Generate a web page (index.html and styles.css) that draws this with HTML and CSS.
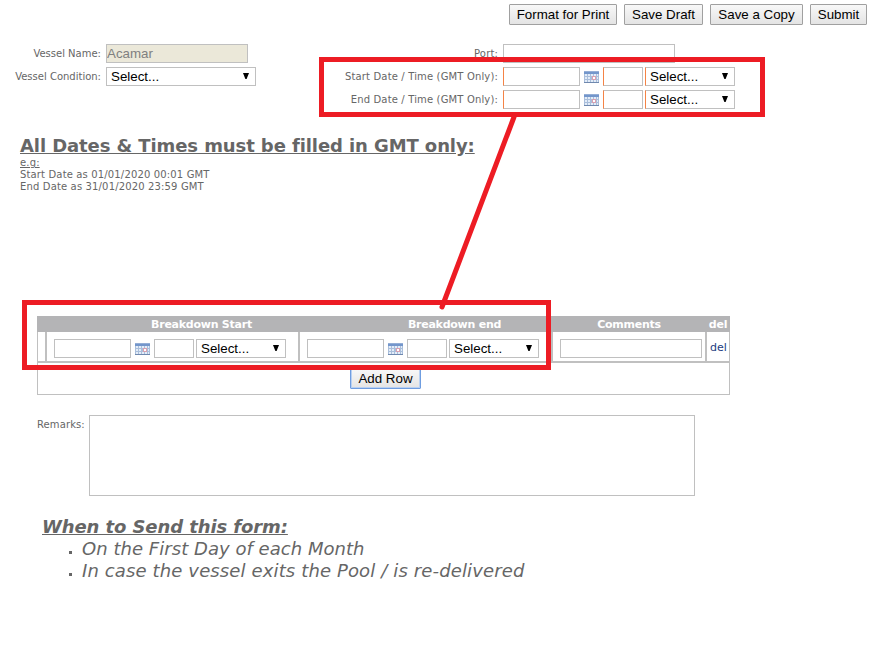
FILE: index.html
```html
<!DOCTYPE html>
<html lang="en">
<head>
    <meta charset="UTF-8">
    <title>Breakdown Report</title>
    <link rel="stylesheet" href="styles.css">
</head>
<body>
    <!-- Calendar icon, shared by all date fields -->
    <svg class="defs" width="0" height="0">
        <symbol id="calendar" viewBox="0 0 15 12">
            <rect width="15" height="12" fill="#a9bedb"/>
            <rect width="15" height="3" fill="#7396cb"/>
            <rect width="15" height="1" fill="#94aed6"/>
            <path d="M1 3h2v2H1zM4 3h2v2H4zM7 3h2v2H7zM10 3h2v2h-2zM13 3h1v2h-1zM1 6h2v2H1zM4 6h2v2H4zM13 6h1v2h-1zM1 9h2v2H1zM4 9h2v2H4zM7 9h2v2H7zM10 9h2v2h-2zM13 9h1v2h-1z" fill="#e3ecf8"/>
            <path d="M0 11h15v1H0z" fill="#6f88ae"/>
            <rect x="8.5" y="5.5" width="3" height="3" fill="#fff" stroke="#d9a0b0"/>
        </symbol>
    </svg>

    <div class="page">
        <div class="toolbar">
            <button class="print">Format for Print</button>
            <button class="draft">Save Draft</button>
            <button class="copy">Save a Copy</button>
            <button class="submit">Submit</button>
        </div>

        <div class="fields">
            <div class="left">
                <div class="row">
                    <label>Vessel Name:</label>
                    <input class="vessel" type="text" value="Acamar" disabled>
                </div>
                <div class="row">
                    <label>Vessel Condition:</label>
                    <div class="select condition">Select...</div>
                </div>
            </div>
            <div class="right">
                <div class="row">
                    <label>Port:</label>
                    <input class="port" type="text">
                </div>
                <div class="row required">
                    <label>Start Date / Time (GMT Only):</label>
                    <input class="date" type="text">
                    <svg class="cal"><use href="#calendar"/></svg>
                    <input class="time" type="text">
                    <div class="select">Select...</div>
                </div>
                <div class="row required">
                    <label>End Date / Time (GMT Only):</label>
                    <input class="date" type="text">
                    <svg class="cal"><use href="#calendar"/></svg>
                    <input class="time" type="text">
                    <div class="select">Select...</div>
                </div>
            </div>
        </div>

        <div class="notice">
            <h2>All Dates &amp; Times must be filled in GMT only:</h2>
            <p><u>e.g:</u></p>
            <p>Start Date as 01/01/2020 00:01 GMT</p>
            <p>End Date as 31/01/2020 23:59 GMT</p>
        </div>

        <div class="breakdown">
            <div class="grid head">
                <span></span>
                <span class="wide">Breakdown Start</span>
                <span class="wide">Breakdown end</span>
                <span>Comments</span>
                <span>del</span>
            </div>
            <div class="grid line">
                <div></div>
                <div class="cell">
                    <input class="date" type="text">
                    <svg class="cal"><use href="#calendar"/></svg>
                    <input class="time" type="text">
                    <div class="select">Select...</div>
                </div>
                <div class="cell">
                    <input class="date" type="text">
                    <svg class="cal"><use href="#calendar"/></svg>
                    <input class="time" type="text">
                    <div class="select">Select...</div>
                </div>
                <div class="cell">
                    <input class="comments" type="text">
                </div>
                <div class="del"><a>del</a></div>
            </div>
            <div class="foot">
                <button class="add">Add Row</button>
            </div>
        </div>

        <div class="remarks">
            <label>Remarks:</label>
            <textarea></textarea>
        </div>

        <div class="when">
            <h2>When to Send this form:</h2>
            <ul>
                <li class="first">On the First Day of each Month</li>
                <li class="second">In case the vessel exits the Pool / is re-delivered</li>
            </ul>
        </div>

        <!-- Red markup over the form -->
        <svg class="markup" width="876" height="647" fill="none" stroke="#ed1c24" stroke-width="5">
            <rect x="321.5" y="59.5" width="441" height="55"/>
            <rect x="24.5" y="302.5" width="524" height="65"/>
            <path d="M514 117L442 307" stroke-linecap="round"/>
        </svg>
    </div>
</body>
</html>
```

FILE: styles.css
```css
* {
    box-sizing: border-box;
}

body {
    margin: 0;
    background: #fff;
    color: #666;
    font-family: Verdana, "DejaVu Sans", sans-serif;
    font-size: 10px;
}

.defs {
    display: block;
}

.page {
    position: relative;
    width: 876px;
    height: 647px;
    overflow: hidden;
}

/* Buttons */
.toolbar {
    display: flex;
    justify-content: flex-end;
    gap: 7px;
    padding: 4px 9px 0 0;
}

button {
    height: 21px;
    padding: 0;
    border: 1px solid #a0a0a0;
    border-radius: 1px;
    background: linear-gradient(#f8f8f8, #e4e4e4);
    color: #000;
    font: 13.33px/19px "Liberation Sans", Arial, sans-serif;
    white-space: nowrap;
}

.print { width: 108px; }
.draft { width: 79px; }
.copy { width: 93px; }
.submit { width: 57px; }

/* Inputs */
input, textarea, .select {
    height: 19px;
    margin: 0;
    padding: 0 1px;
    border: 1px solid #c0c0c0;
    border-radius: 0;
    background: #fff;
    color: #000;
    font: 13.33px/17px "Liberation Sans", Arial, sans-serif;
}

.select {
    display: flex;
    justify-content: space-between;
    width: 90px;
    margin-left: 2px;
    padding: 0 6px 0 4px;
}

.select::after {
    content: "";
    width: 6px;
    height: 6px;
    margin-top: 5px;
    background: #000;
    clip-path: polygon(0 0, 100% 0, 60% 100%, 40% 100%);
}

.date { width: 77px; }
.time { width: 40px; }
.port { width: 172px; }
.comments { width: 142px; }

.cal {
    width: 15px;
    height: 12px;
    margin: 1px 4px 0;
}

.vessel {
    width: 142px;
    padding: 0;
    background: #ebe8d9;
    color: #808080;
}

.condition {
    width: 150px;
    margin-left: 0;
}

.required .date, .required .time, .required .select {
    border-left: 1px solid #f58345;
}

/* Top form */
.fields {
    display: flex;
    height: 65px;
    margin-top: 19px;
}

.left {
    width: 319px;
}

.row {
    display: flex;
    align-items: center;
    height: 19px;
    margin-bottom: 4px;
}

.row label {
    flex: none;
    text-align: right;
    white-space: nowrap;
}

.left label {
    width: 101px;
    margin-right: 5px;
}

.right label {
    width: 179px;
    margin-right: 5px;
    letter-spacing: 0.15px;
}

/* Notice */
.notice {
    height: 181px;
    margin: 26px 0 0 20px;
}

h2 {
    margin: 0;
    font-size: 18px;
    line-height: 22px;
    letter-spacing: -0.09px;
    text-decoration: underline;
    white-space: nowrap;
}

.notice p {
    margin: 0;
    line-height: 12px;
    letter-spacing: 0.15px;
}

/* Breakdown table */
.breakdown {
    width: 693px;
    margin-left: 37px;
}

.grid {
    display: grid;
    grid-template-columns: 9px 253px 253px 154px 24px;
}

.head {
    height: 16px;
    background: #b4b4b6;
    color: #fff;
    font-size: 11px;
    font-weight: bold;
    line-height: 17px;
    letter-spacing: -0.25px;
    text-align: center;
}

.head .wide {
    padding-left: 58px;
}

.line {
    grid-template-columns: 7px 253px 253px 154px 24px;
    height: 31px;
    border: solid #c0c0c0;
    border-width: 0 1px 2px;
}

.line > div + div {
    border-left: 2px solid #c0c0c0;
}

.cell {
    display: flex;
    align-items: flex-start;
    padding: 7px 0 0 7px;
}

.cell .cal {
    margin-top: 4px;
}

.del {
    padding-left: 3px;
    color: #1c3c80;
    font-size: 11px;
    line-height: 31px;
}

.foot {
    height: 32px;
    padding-top: 5px;
    border: 1px solid #c0c0c0;
    border-top: 0;
}

.add {
    display: block;
    width: 71px;
    margin-left: 312px;
    border: 1px solid #6f9de0;
    box-shadow: inset 0 0 0 1px #b8d0f2;
}

/* Remarks */
.remarks {
    display: flex;
    margin: 20px 0 0 37px;
}

.remarks label {
    width: 52px;
    padding-top: 4px;
    letter-spacing: 0.1px;
}

textarea {
    width: 606px;
    height: 81px;
    resize: none;
}

/* Instructions */
.when {
    margin: 20px 0 0 42px;
    font-size: 18px;
    font-style: italic;
    line-height: 22px;
}

.when ul {
    margin: 0;
    padding: 0;
    list-style: none;
}

.when li {
    display: flex;
    align-items: center;
    white-space: nowrap;
}

.first {
    letter-spacing: 0.04px;
}

.second {
    letter-spacing: 0.13px;
}

.when li::before {
    content: "";
    width: 3px;
    height: 3px;
    margin: 7px 10px 0 27px;
    background: #666;
}

.markup {
    position: absolute;
    top: 0;
    left: 0;
}
```
